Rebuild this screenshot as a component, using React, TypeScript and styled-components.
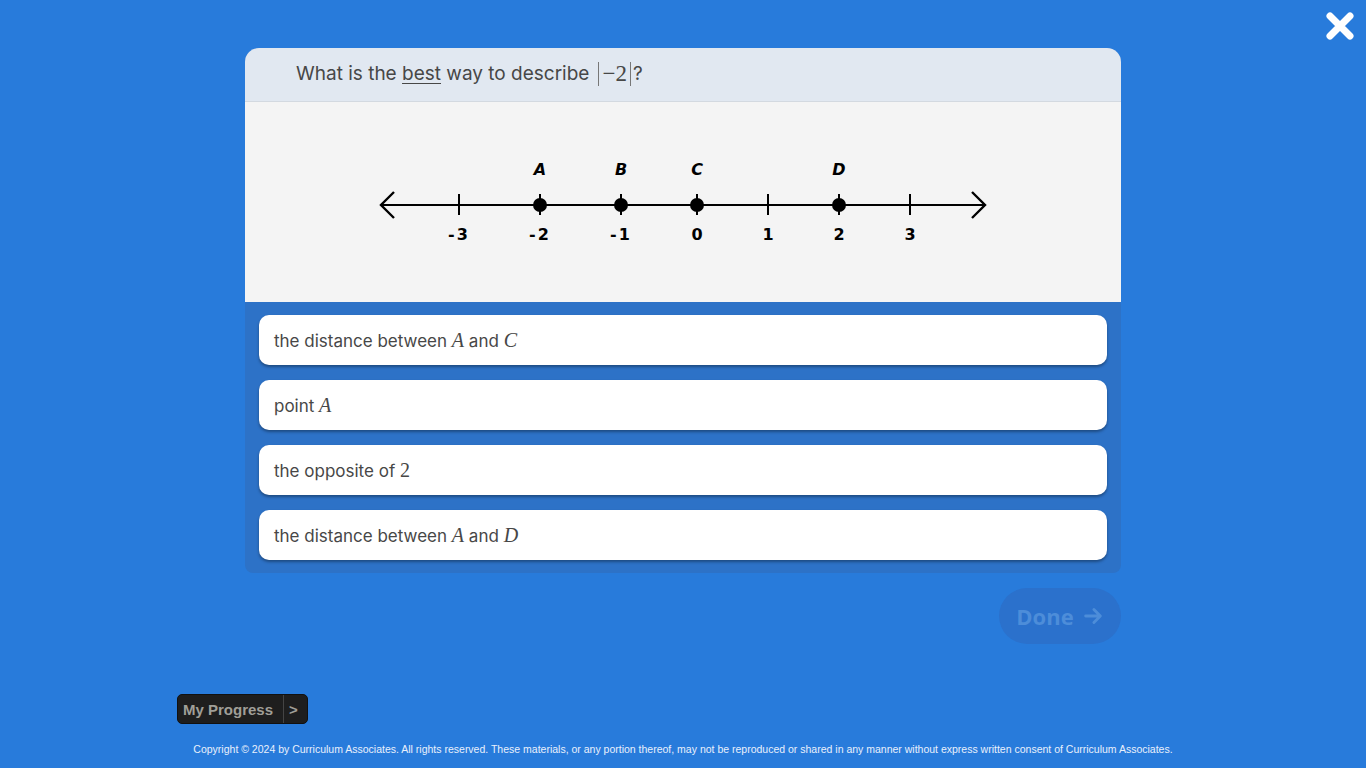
import React from 'react';
import styled, { createGlobalStyle } from 'styled-components';

const GlobalStyle = createGlobalStyle`
    html, body {
        margin:0;
        padding:0;
        background:#287bdb;
    }
    * { box-sizing:border-box; }
`;

const Page = styled.div`
    position:relative;
    min-height:100vh;
    background:#287bdb;
    display:flex;
    flex-direction:column;
    align-items:center;
    padding-top:48px;
    font-family:"Inter", "Noto Sans", sans-serif;
`;

const CloseButton = styled.button`
    position:absolute;
    top:10px;
    right:10px;
    width:32px;
    height:32px;
    padding:0;
    border:none;
    background:transparent;
    cursor:pointer;
`;

const Card = styled.div`
    width:876px;
    border-radius:14px 14px 8px 8px;
    overflow:hidden;
    background:#2d72c7;
`;

const Question = styled.div`
    height:54px;
    background:#e1e8f1;
    border-bottom:1px solid #d3d9e0;
    display:flex;
    align-items:center;
    padding:0 0 2px 51px;
    font-size:19px;
    color:#474747;
    u { text-underline-offset:3px; }
`;

const Math = styled.span`
    font-family:"Liberation Serif", "DejaVu Serif", serif;
    font-style:${p => (p.$upright ? 'normal' : 'italic')};
    font-size:1.18em;
`;

const Abs = styled.span`
    font-family:"Liberation Serif", serif;
    font-size:23px;
    margin:0 2px 0 9px;
    display:inline-flex;
    align-items:center;
    gap:3px;
    i {
        display:inline-block;
        width:1px;
        height:24px;
        background:#777;
    }
`;

const Figure = styled.div`
    height:200px;
    background:#f4f4f4;
    display:flex;
    justify-content:center;
    align-items:flex-start;
    padding-top:38px;
`;

const Choices = styled.div`
    display:flex;
    flex-direction:column;
    gap:15px;
    padding:13px 14px 13px 14px;
`;

const Choice = styled.button`
    height:50px;
    border:none;
    border-radius:10px;
    background:#ffffff;
    box-shadow:0 2px 3px rgba(0, 0, 0, 0.35);
    text-align:left;
    padding:0 15px;
    font-family:"Inter", "Noto Sans", sans-serif;
    font-size:17px;
    color:#474747;
    cursor:pointer;
`;

const DoneRow = styled.div`
    width:876px;
    display:flex;
    justify-content:flex-end;
    margin-top:15px;
`;

const DoneButton = styled.button`
    width:122px;
    height:56px;
    border:none;
    border-radius:28px;
    background:#2b71cc;
    color:#4d8dd9;
    font-family:"Open Sans", sans-serif;
    font-weight:700;
    font-size:22px;
    display:flex;
    align-items:center;
    justify-content:center;
    gap:8px;
    padding-bottom:2px;
`;

const Footer = styled.div`
    width:1012px;
    margin-top:50px;
    display:flex;
    flex-direction:column;
`;

const ProgressButton = styled.button`
    align-self:flex-start;
    height:30px;
    display:flex;
    align-items:stretch;
    padding:0;
    border:1px solid #111;
    border-radius:5px;
    background:#1e1e1e;
    color:#a09f98;
    font-family:"Liberation Sans", Arial, sans-serif;
    font-weight:700;
    font-size:15px;
    span {
        display:flex;
        align-items:center;
        padding:0 10px 0 5px;
    }
    span + span {
        border-left:1px solid #444;
        padding:0 9px 0 5px;
    }
`;

const Copyright = styled.p`
    margin:19px 0 0 0;
    text-align:center;
    font-family:"Liberation Sans", Arial, sans-serif;
    font-size:10.5px;
    color:#e8f0fb;
`;

//수직선 그림
const ticks = [
    { x: 459, label: '-3' },
    { x: 540, label: '-2', point: 'A' },
    { x: 621, label: '-1', point: 'B' },
    { x: 697, label: '0', point: 'C' },
    { x: 768, label: '1' },
    { x: 839, label: '2', point: 'D' },
    { x: 910, label: '3' },
];

const NumberLine = () => (
    <svg width="626" height="120" viewBox="370 140 626 120">
        <line x1={381} y1={205} x2={985} y2={205} stroke="#000" strokeWidth="2.2" />
        <polyline points="394,192 381,205 394,218" fill="none" stroke="#000" strokeWidth="2.4" />
        <polyline points="972,192 985,205 972,218" fill="none" stroke="#000" strokeWidth="2.4" />
        {ticks.map(t => (
            <g key={t.label}>
                <line x1={t.x} y1={194} x2={t.x} y2={215} stroke="#000" strokeWidth="2" />
                {t.point && <circle cx={t.x} cy={205} r={7} fill="#000" />}
                {t.point && (
                    <text x={t.x} y={175} textAnchor="middle" fontFamily="DejaVu Sans, sans-serif" fontWeight="700" fontStyle="italic" fontSize="16">{t.point}</text>
                )}
                <text x={t.x} y={240} textAnchor="middle" fontFamily="DejaVu Sans, sans-serif" fontWeight="700" fontSize="16" letterSpacing={t.label.length > 1 ? 2 : 0}>{t.label}</text>
            </g>
        ))}
    </svg>
);

const App = () => {
    return (
        <Page>
            <GlobalStyle />
            <CloseButton aria-label="close">
                <svg width="32" height="32" viewBox="0 0 32 32">
                    <path d="M6 6 L26 26 M26 6 L6 26" stroke="#fff" strokeWidth="7" strokeLinecap="round" />
                </svg>
            </CloseButton>
            <Card>
                <Question>
                    What is the&nbsp;<u>best</u>&nbsp;way to describe
                    <Abs><i />−2<i /></Abs>?
                </Question>
                <Figure>
                    <NumberLine />
                </Figure>
                <Choices>
                    <Choice>the distance between <Math>A</Math> and <Math>C</Math></Choice>
                    <Choice>point <Math>A</Math></Choice>
                    <Choice>the opposite of <Math $upright>2</Math></Choice>
                    <Choice>the distance between <Math>A</Math> and <Math>D</Math></Choice>
                </Choices>
            </Card>
            <DoneRow>
                <DoneButton disabled>
                    Done
                    <svg width="22" height="22" viewBox="0 0 24 24" fill="none" stroke="#4d8dd9" strokeWidth="3.2" strokeLinecap="round" strokeLinejoin="round">
                        <path d="M4 12h15M13 5l7 7-7 7" />
                    </svg>
                </DoneButton>
            </DoneRow>
            <Footer>
                <ProgressButton>
                    <span>My Progress</span>
                    <span>&gt;</span>
                </ProgressButton>
                <Copyright>
                    Copyright © 2024 by Curriculum Associates. All rights reserved. These materials, or any portion thereof, may not be reproduced or shared in any manner without express written consent of Curriculum Associates.
                </Copyright>
            </Footer>
        </Page>
    );
};

export default App;
